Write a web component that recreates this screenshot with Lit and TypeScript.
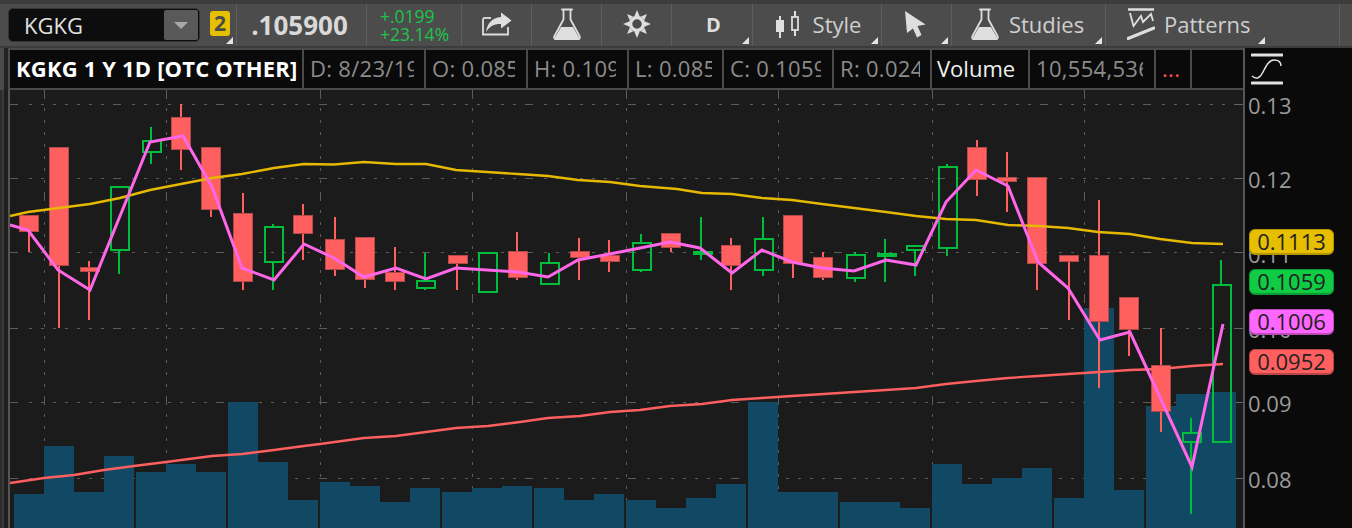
import { LitElement, html, css, svg } from 'lit';
import { customElement } from 'lit/decorators.js';

type Candle = [x: number, top: number, bottom: number, wickTop: number, wickBottom: number, wickX: number, kind: 'r' | 'g'];

// body left, body top, body bottom, wick top, wick bottom, wick x
const CANDLES: Candle[] = [
  [19, 215, 231, 215, 252, 28, 'r'],
  [49, 147, 265, 147, 328, 58, 'r'],
  [80, 267, 271, 261, 320, 88, 'r'],
  [110, 186, 249, 186, 274, 118, 'g'],
  [142, 140, 151, 127, 164, 150, 'g'],
  [171, 117, 149, 104, 170, 180, 'r'],
  [201, 147, 209, 147, 217, 210, 'r'],
  [233, 213, 281, 193, 290, 242, 'r'],
  [264, 226, 261, 224, 290, 272, 'g'],
  [293, 215, 233, 204, 260, 302, 'r'],
  [325, 239, 269, 217, 276, 334, 'r'],
  [355, 237, 279, 237, 288, 364, 'r'],
  [385, 272, 281, 247, 290, 394, 'r'],
  [416, 280, 287, 253, 290, 424, 'g'],
  [448, 255, 263, 255, 290, 456, 'r'],
  [478, 252, 291, 252, 291, 488, 'g'],
  [508, 251, 277, 232, 280, 516, 'r'],
  [540, 262, 283, 253, 283, 548, 'g'],
  [570, 251, 257, 238, 280, 578, 'r'],
  [600, 255, 261, 240, 272, 608, 'r'],
  [632, 242, 269, 234, 272, 640, 'g'],
  [661, 233, 247, 233, 252, 670, 'r'],
  [693, 251, 253, 217, 260, 700, 'g'],
  [721, 245, 265, 238, 290, 730, 'r'],
  [754, 238, 269, 217, 276, 762, 'g'],
  [783, 215, 263, 215, 278, 792, 'r'],
  [813, 257, 277, 252, 280, 822, 'r'],
  [846, 254, 277, 252, 282, 854, 'g'],
  [877, 253, 255, 239, 282, 884, 'g'],
  [906, 245, 249, 245, 276, 914, 'g'],
  [938, 166, 247, 164, 256, 946, 'g'],
  [967, 147, 179, 140, 196, 976, 'r'],
  [997, 177, 181, 152, 212, 1006, 'r'],
  [1027, 177, 263, 177, 290, 1036, 'r'],
  [1059, 255, 261, 255, 320, 1068, 'r'],
  [1089, 255, 321, 200, 388, 1098, 'r'],
  [1119, 297, 329, 297, 356, 1128, 'r'],
  [1151, 365, 411, 328, 432, 1160, 'r'],
  [1182, 432, 441, 418, 514, 1190, 'g'],
  [1212, 284, 441, 260, 441, 1220, 'g'],
];

// left, right, top
const VOLUME: [number, number, number][] = [
  [14, 44, 494], [44, 74, 446], [74, 104, 492], [104, 134, 456],
  [136, 166, 472], [166, 196, 464], [196, 226, 472],
  [228, 258, 402], [258, 288, 462], [288, 318, 500],
  [320, 350, 482], [350, 380, 486], [380, 410, 502], [410, 440, 488],
  [442, 472, 492], [472, 502, 488], [502, 532, 486],
  [534, 564, 488], [564, 594, 500], [594, 624, 494],
  [626, 656, 500], [656, 686, 508], [686, 716, 498], [716, 746, 484],
  [748, 778, 402], [778, 838, 492],
  [840, 900, 502], [900, 930, 508],
  [932, 962, 464], [962, 992, 484], [992, 1022, 478], [1022, 1052, 468],
  [1054, 1084, 498], [1084, 1114, 308], [1114, 1144, 490],
  [1146, 1176, 406], [1176, 1206, 394], [1206, 1236, 392],
];

const MAGENTA = '10,225 28,230 58,270 90,290 150,142 183,136 212,187 242,268 274,280 304,244 334,258 364,277 396,268 426,279 456,268 518,272 548,277 578,260 620,252 670,242 700,248 732,273 762,250 792,262 822,268 854,271 886,260 916,265 946,202 976,170 1008,186 1038,262 1068,288 1100,340 1130,332 1192,467 1223,324';
const YELLOW = '10,216 28,212 90,204 120,198 150,190 181,184 212,178 242,174 274,168 304,164 334,164.5 364,162 396,164 426,164 456,170 518,174 548,176 578,180 610,182 640,186 677,189 702,193 732,194 762,198 792,200 822,204 854,208 886,212 916,216 946,219 976,220 1008,225 1038,226 1068,228 1098,232 1130,234 1160,239 1192,243 1223,244';
const RED = '10,483 44,478 74,475 104,470 134,466 166,462 212,456 242,454 274,450 304,446 320,444 364,438 396,436 426,432 456,428 488,426 520,422 548,418 580,416 610,412 640,410 670,406 702,404 732,400 762,398 792,396 824,394 854,392 886,390 916,388 946,384 976,381 1008,378 1038,376 1068,374 1100,372 1130,370 1160,369 1192,366 1223,364';

const H_GRID = [104, 178, 252, 328, 402, 478];
const V_GRID = [44, 166, 320, 472, 626, 778, 932, 1084];

const AXIS = [
  { text: '0.13', y: 105 },
  { text: '0.12', y: 179 },
  { text: '0.11', y: 254 },
  { text: '0.10', y: 329 },
  { text: '0.09', y: 403 },
  { text: '0.08', y: 479 },
];

const PILLS = [
  { text: '0.1113', y: 242, cls: 'yellow' },
  { text: '0.1059', y: 282, cls: 'green' },
  { text: '0.1006', y: 322, cls: 'magenta' },
  { text: '0.0952', y: 362, cls: 'red' },
];

const flask = html`<svg class="icon" width="28" height="32" viewBox="0 0 28 32">
  <path d="M9 1.5h10" stroke="#dedede" stroke-width="2" fill="none" stroke-linecap="round"/>
  <path d="M10.500 2v9.500L1.500 28a2.300 2.300 0 0 0 2 3.500h21a2.300 2.300 0 0 0 2-3.500L17.500 11.500V2" stroke="#dedede" stroke-width="1.800" fill="none"/>
  <path d="M8 19h12l6 10.500a1.500 1.500 0 0 1-1.500 2h-21a1.500 1.500 0 0 1-1.500-2z" fill="#dedede"/>
</svg>`;

@customElement('app-root')
export class AppRoot extends LitElement {
  static styles = css`
    :host {
      display: block;
      width: 1352px;
      height: 528px;
      overflow: hidden;
      background: #0a0a0a;
      font-family: 'Open Sans', sans-serif;
      color: #dcdcdc;
    }
    .toolbar {
      display: flex;
      height: 48px;
      box-sizing: border-box;
      padding: 4px 0 2px;
      background: #3c3c3c;
    }
    .seg {
      position: relative;
      display: flex;
      align-items: center;
      justify-content: center;
      box-sizing: border-box;
      background: #4c4c4c;
      border-right: 1px solid #5e5e5e;
      font-size: 22px;
      color: #cfcfcf;
    }
    .corner::after {
      content: '';
      position: absolute;
      right: 3px;
      bottom: 2px;
      border-style: solid;
      border-width: 0 0 7px 7px;
      border-color: transparent transparent #e4e4e4 transparent;
    }
    .w-symbol { width: 237px; justify-content: flex-start; padding-left: 8px; gap: 10px; }
    .w-price { width: 130px; padding-right: 4px; }
    .w-change { width: 95px; padding-left: 13px; justify-content: flex-start; }
    .w-icon { width: 70px; padding-bottom: 2px; }
    .w-cursor { padding: 0 4px 3px 0; }
    .w-d { width: 81px; padding: 0 0 2px 3px; }
    .w-style { width: 129px; gap: 14px; padding: 0 0 2px 3px; }
    .w-studies { width: 154px; gap: 10px; padding: 0 2px 2px 0; }
    .w-patterns { width: 234px; justify-content: flex-start; padding: 0 0 2px 21px; gap: 9px; }
    .w-patterns.corner::after { right: 74px; }
    .w-rest { flex: 1; border-right: none; }
    .symbol {
      display: flex;
      align-items: center;
      justify-content: space-between;
      box-sizing: border-box;
      width: 192px;
      height: 34px;
      padding: 0 1px 0 15px;
      background: #0d0d0d;
      border: 1px solid #333;
      border-radius: 5px;
      font-size: 22px;
      color: #e2e2e2;
    }
    .caret {
      display: flex;
      align-items: center;
      justify-content: center;
      width: 34px;
      height: 30px;
      background: #595959;
      border-radius: 2px;
    }
    .caret i {
      border-style: solid;
      border-width: 7px 7px 0;
      border-color: #a8a8a8 transparent transparent;
    }
    .badge {
      width: 20px;
      height: 25px;
      margin-top: -3px;
      border-radius: 3px;
      background: #e6bf00;
      color: #4a4a4a;
      font-size: 21px;
      font-weight: 700;
      line-height: 25px;
      text-align: center;
    }
    .price { font-size: 26px; font-weight: 700; color: #d9d9d9; }
    .change {
      font-size: 17.500px;
      line-height: 18px;
      color: #1cc44a;
    }
    .bold-d { font-size: 20px; font-weight: 700; color: #dedede; }

    .body { display: flex; height: 480px; }
    .left { width: 1243px; background: #3c3c3c; }
    .info {
      display: flex;
      gap: 2px;
      box-sizing: border-box;
      height: 42px;
      padding: 2px 0 2px 10px;
      background: linear-gradient(to right, #4a4a4a 4px, #222 4px, #222 8px, #4a4a4a 8px);
      background-color: #4a4a4a;
    }
    .cell {
      box-sizing: border-box;
      overflow: hidden;
      padding-left: 6px;
      background: #0a0a0a;
      font-size: 22px;
      letter-spacing: 0.300px;
      line-height: 36px;
      white-space: nowrap;
      color: #8c8c8c;
    }
    .cell span { display: block; overflow: hidden; }
    .title { width: 292px; color: #fff; font-weight: 700; letter-spacing: 0.170px; }
    .vol { padding-left: 5px; color: #f0f0f0; letter-spacing: 0; }
    .dots { color: #ff4d4d; }
    .w120 { width: 120px; } .w120 span { width: 104px; }
    .w100 { width: 100px; } .w100 span { width: 83px; }
    .w99 { width: 99px; } .w99 span { width: 82px; }
    .w93 { width: 93px; } .w93 span { width: 77px; }
    .w108 { width: 108px; } .w108 span { width: 91px; }
    .w96 { width: 96px; } .w96 span { width: 80px; }
    .w124 { width: 124px; } .w124 span { width: 107px; }
    .w34 { width: 34px; }
    .w50 { flex: 1; }
    .plot {
      display: flex;
      height: 438px;
      background: linear-gradient(to right, #2c2c2c 2px, #3a3a3a 2px, #3a3a3a 4px, #1e1e1e 4px, #1e1e1e 8px, #555 8px);
      padding-left: 10px;
    }
    .plot svg { display: block; background: #1b1b1b; }

    .axis {
      position: relative;
      flex: 1;
      box-sizing: border-box;
      border-left: 2px solid #555;
      background: #0a0a0a;
    }
    .study-icon { display: block; margin: 5px 0 0 6px; }
    .tick {
      position: absolute;
      left: 3px;
      font-size: 22px;
      line-height: 26px;
      color: #9a9a9a;
      transform: translateY(-50%);
    }
    .pill {
      position: absolute;
      left: 4px;
      box-sizing: border-box;
      width: 85px;
      height: 26px;
      border-radius: 6px;
      border: 1px solid;
      border-bottom-width: 2px;
      font-size: 22px;
      line-height: 23px;
      text-align: center;
      color: #222;
      transform: translateY(-50%);
    }
    .yellow { background: #e6bf00; border-color: #b59600; }
    .green { background: #10cc44; border-color: #0c9a32; }
    .magenta { background: #ff66ff; border-color: #bb4abb; }
    .red { background: #ff5f5f; border-color: #b84646; }
  `;

  private renderChart() {
    return html`<svg width="1233" height="438" viewBox="10 90 1233 438">
      ${H_GRID.map((y) => svg`
        <line x1="10" x2="1235" y1=${y + 0.5} y2=${y + 0.5} stroke="#5c5c5c" stroke-dasharray="8 11 3 9 3 9 3 9 3 9 3 9 3 9 3 9"/>
        <line x1="1235" x2="1243" y1=${y + 0.5} y2=${y + 0.5} stroke="#666"/>`)}
      ${V_GRID.map((x) => svg`
        <line x1=${x + 0.5} x2=${x + 0.5} y1="90" y2="528" stroke="#5c5c5c" stroke-dasharray="9 9 3 9 3 9 3 9 3 9 3 9 3 9 3 9"/>`)}
      ${VOLUME.map(([l, r, t]) => svg`<rect x=${l} y=${t} width=${r - l} height=${528 - t} fill="#114a66" fill-opacity="0.96"/>`)}
      ${CANDLES.map(([x, top, bottom, wt, wb, wx, kind]) =>
        kind === 'r'
          ? svg`<line x1=${wx + 1} x2=${wx + 1} y1=${wt} y2=${wb} stroke="#ff5f5f" stroke-width="2"/>
              <rect x=${x + 0.5} y=${top + 0.5} width="19" height=${bottom - top} fill="#ff5f5f" stroke="#b24a4a"/>`
          : svg`<line x1=${wx + 1} x2=${wx + 1} y1=${wt} y2=${top} stroke="#00bd3c" stroke-width="2"/>
              <line x1=${wx + 1} x2=${wx + 1} y1=${bottom} y2=${wb} stroke="#00bd3c" stroke-width="2"/>
              <rect x=${x + 1} y=${top + 1} width="18" height=${bottom - top} fill="none" stroke="#00bd3c" stroke-width="2"/>`)}
      <polyline points=${RED} fill="none" stroke="#ff5f5f" stroke-width="2.300"/>
      <polyline points=${YELLOW} fill="none" stroke="#e6b800" stroke-width="2.400"/>
      <polyline points=${MAGENTA} fill="none" stroke="#ff66e8" stroke-width="3"/>
    </svg>`;
  }

  render() {
    return html`
      <div class="toolbar">
        <div class="seg w-symbol corner">
          <div class="symbol">KGKG<div class="caret"><i></i></div></div>
          <div class="badge">2</div>
        </div>
        <div class="seg w-price"><span class="price">.105900</span></div>
        <div class="seg w-change"><div class="change">+.0199<br>+23.14%</div></div>
        <div class="seg w-icon">
          <svg class="icon" width="30" height="24" viewBox="0 0 30 24">
            <path d="M1 6.500V22.500H26V15" fill="none" stroke="#dedede" stroke-width="1.800"/>
            <path d="M1 6h8" stroke="#dedede" stroke-width="1.800"/>
            <path d="M19 0.500 29.500 8.500 19 16.500V12C13 12 8 13.500 4 20 5 12 10 5.500 19 5z" fill="#dedede"/>
          </svg>
        </div>
        <div class="seg w-icon">${flask}</div>
        <div class="seg w-icon">
          <svg width="28" height="28" viewBox="0 0 28 28">
            <circle cx="14" cy="14" r="6.500" fill="none" stroke="#dedede" stroke-width="3.500"/>
            <path d="M14 0 16.500 6h-5zM14 28 11.500 22h5zM0 14 6 11.500v5zM28 14 22 16.500v-5zM4.100 4.100 10 6.500 6.500 10zM23.900 23.900 18 21.500 21.500 18zM23.900 4.100 21.500 10 18 6.500zM4.100 23.900 6.500 18 10 21.500z" fill="#dedede"/>
          </svg>
        </div>
        <div class="seg w-d corner"><span class="bold-d">D</span></div>
        <div class="seg w-style corner">
          <svg width="23" height="27" viewBox="0 0 23 27">
            <path d="M4 5v22" stroke="#dedede" stroke-width="2"/>
            <rect x="0" y="9" width="8" height="12" fill="#dedede"/>
            <path d="M19 0v6M19 19v6" stroke="#dedede" stroke-width="2"/>
            <rect x="16" y="6" width="6" height="13" fill="none" stroke="#dedede" stroke-width="1.800"/>
          </svg>
          <span>Style</span>
        </div>
        <div class="seg w-icon w-cursor corner">
          <svg width="22" height="28" viewBox="0 0 22 28">
            <path d="M1 1 21.500 14.500 13.500 16 17.500 25 13 27.500 9 18.500 3 23z" fill="#dedede"/>
          </svg>
        </div>
        <div class="seg w-studies corner">${flask}<span>Studies</span></div>
        <div class="seg w-patterns corner">
          <svg width="28" height="32" viewBox="0 0 28 32">
            <path d="M1 1.500h26" stroke="#dedede" stroke-width="2.500"/>
            <path d="M3 5 6.500 18 14 8 16 14 24 6 26 13" fill="none" stroke="#dedede" stroke-width="1.800"/>
            <path d="M1 30.500 27 20" stroke="#dedede" stroke-width="3" stroke-linecap="round"/>
          </svg>
          <span>Patterns</span>
        </div>
        <div class="seg w-rest"></div>
      </div>
      <div class="body">
        <div class="left">
          <div class="info">
            <div class="cell title">KGKG 1 Y 1D [OTC OTHER]</div>
            <div class="cell w120"><span>D: 8/23/19</span></div>
            <div class="cell w100"><span>O: 0.085</span></div>
            <div class="cell w99"><span>H: 0.109</span></div>
            <div class="cell w93"><span>L: 0.085</span></div>
            <div class="cell w108"><span>C: 0.1059</span></div>
            <div class="cell w96"><span>R: 0.024</span></div>
            <div class="cell w96 vol"><span>Volume</span></div>
            <div class="cell w124"><span>10,554,536</span></div>
            <div class="cell w34 dots">...</div>
            <div class="cell w50"></div>
          </div>
          <div class="plot">${this.renderChart()}</div>
        </div>
        <div class="axis">
          <svg class="study-icon" width="32" height="32" viewBox="0 0 32 32">
            <path d="M1 2h30M1 30h30" stroke="#e2e2e2" stroke-width="3.200" stroke-linecap="round"/>
            <path d="M1 23C6 27 9 25 12 19S18 7 23 7C27 7 30 8 30 13" fill="none" stroke="#e2e2e2" stroke-width="1.500"/>
          </svg>
          ${AXIS.map((a) => html`<div class="tick" style="top:${a.y - 48}px">${a.text}</div>`)}
          ${PILLS.map((p) => html`<div class="pill ${p.cls}" style="top:${p.y - 48}px">${p.text}</div>`)}
        </div>
      </div>
    `;
  }
}
